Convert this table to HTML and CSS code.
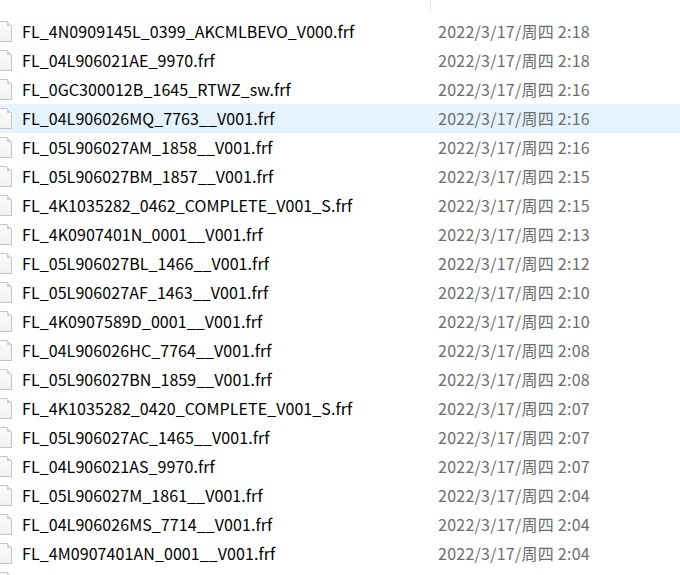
FILE: index.html
```html
<!DOCTYPE html>
<html lang="zh-CN">
<head>
<meta charset="utf-8">
<link rel="stylesheet" href="styles.css">
</head>
<body>
<div class="view">
  <div class="header"><span class="divider"></span></div>
  <ul class="list">
    <li class="row"><span class="icon"></span><span class="name">FL_4N0909145L_0399_AKCMLBEVO_V000.frf</span><span class="date">2022/3/17/周四 2:18</span></li>
    <li class="row"><span class="icon"></span><span class="name">FL_04L906021AE_9970.frf</span><span class="date">2022/3/17/周四 2:18</span></li>
    <li class="row"><span class="icon"></span><span class="name">FL_0GC300012B_1645_RTWZ_sw.frf</span><span class="date">2022/3/17/周四 2:16</span></li>
    <li class="row hover"><span class="icon"></span><span class="name">FL_04L906026MQ_7763__V001.frf</span><span class="date">2022/3/17/周四 2:16</span></li>
    <li class="row"><span class="icon"></span><span class="name">FL_05L906027AM_1858__V001.frf</span><span class="date">2022/3/17/周四 2:16</span></li>
    <li class="row"><span class="icon"></span><span class="name">FL_05L906027BM_1857__V001.frf</span><span class="date">2022/3/17/周四 2:15</span></li>
    <li class="row"><span class="icon"></span><span class="name">FL_4K1035282_0462_COMPLETE_V001_S.frf</span><span class="date">2022/3/17/周四 2:15</span></li>
    <li class="row"><span class="icon"></span><span class="name">FL_4K0907401N_0001__V001.frf</span><span class="date">2022/3/17/周四 2:13</span></li>
    <li class="row"><span class="icon"></span><span class="name">FL_05L906027BL_1466__V001.frf</span><span class="date">2022/3/17/周四 2:12</span></li>
    <li class="row"><span class="icon"></span><span class="name">FL_05L906027AF_1463__V001.frf</span><span class="date">2022/3/17/周四 2:10</span></li>
    <li class="row"><span class="icon"></span><span class="name">FL_4K0907589D_0001__V001.frf</span><span class="date">2022/3/17/周四 2:10</span></li>
    <li class="row"><span class="icon"></span><span class="name">FL_04L906026HC_7764__V001.frf</span><span class="date">2022/3/17/周四 2:08</span></li>
    <li class="row"><span class="icon"></span><span class="name">FL_05L906027BN_1859__V001.frf</span><span class="date">2022/3/17/周四 2:08</span></li>
    <li class="row"><span class="icon"></span><span class="name">FL_4K1035282_0420_COMPLETE_V001_S.frf</span><span class="date">2022/3/17/周四 2:07</span></li>
    <li class="row"><span class="icon"></span><span class="name">FL_05L906027AC_1465__V001.frf</span><span class="date">2022/3/17/周四 2:07</span></li>
    <li class="row"><span class="icon"></span><span class="name">FL_04L906021AS_9970.frf</span><span class="date">2022/3/17/周四 2:07</span></li>
    <li class="row"><span class="icon"></span><span class="name">FL_05L906027M_1861__V001.frf</span><span class="date">2022/3/17/周四 2:04</span></li>
    <li class="row"><span class="icon"></span><span class="name">FL_04L906026MS_7714__V001.frf</span><span class="date">2022/3/17/周四 2:04</span></li>
    <li class="row"><span class="icon"></span><span class="name">FL_4M0907401AN_0001__V001.frf</span><span class="date">2022/3/17/周四 2:04</span></li>
    <li class="row"><span class="icon"></span><span class="name"></span><span class="date"></span></li>
  </ul>
</div>
</body>
</html>
```
FILE: styles.css
```css
* { box-sizing: border-box; }
html, body { margin: 0; padding: 0; background: #fff; }
body { width: 680px; height: 575px; overflow: hidden; font-family: "Noto Sans CJK SC", "Noto Sans", sans-serif; font-size: 16px; }
.view { width: 680px; }
.header { height: 17px; position: relative; }
.divider { position: absolute; left: 430px; top: 0; width: 1px; height: 10px; background: #e5e5e5; }
.list { list-style: none; margin: 0; padding: 0; }
.row { height: 29px; display: flex; align-items: center; }
.row.hover { background: #e5f3ff; }
.icon { width: 12px; height: 21px; flex: none; position: relative; border: 1px solid #c4c4c4; border-left: none; clip-path: polygon(0 0, calc(100% - 5px) 0, 100% 5px, 100% 100%, 0 100%); background: linear-gradient(#fbfbfb, #f2f2f2); }
.icon::after { content: ""; position: absolute; right: -1px; top: -1px; width: 5px; height: 5px; background: linear-gradient(225deg, transparent 50%, #d0d0d0 50%); }
.name { margin-left: 10px; margin-bottom: 2px; width: 416px; color: #000; white-space: nowrap; letter-spacing: 0.08px; }
.date { margin-bottom: 2px; color: #6d6d6d; white-space: nowrap; letter-spacing: 0.25px; }
```
